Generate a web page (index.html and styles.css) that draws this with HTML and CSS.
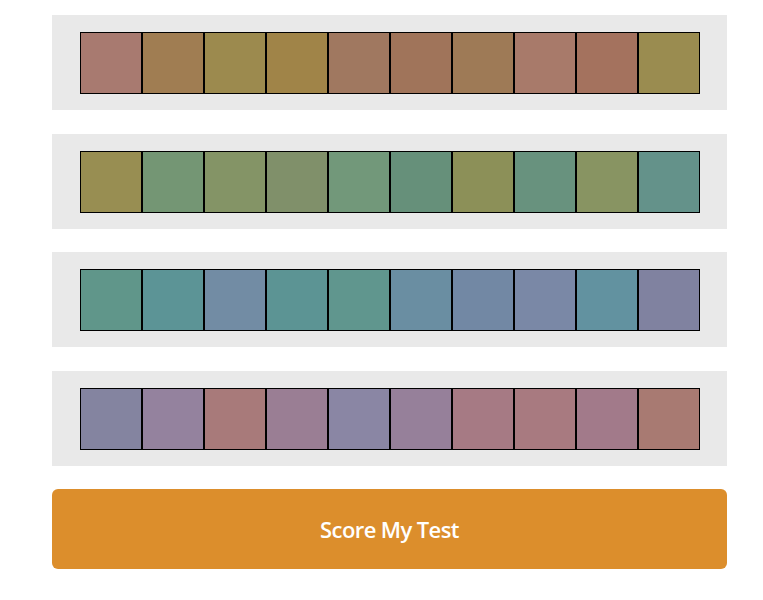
FILE: index.html
```html
<html>
<head>
  <title>Hue Test</title>
  <link rel="stylesheet" href="styles.css">
</head>
<body>
  <!-- Rows of colour caps, one panel per row -->
  <div class="test">
    <div class="row">
      <div class="cap" style="background-color: #a87a70;"></div>
      <div class="cap" style="background-color: #a07d52;"></div>
      <div class="cap" style="background-color: #9c8a4e;"></div>
      <div class="cap" style="background-color: #a08448;"></div>
      <div class="cap" style="background-color: #a07860;"></div>
      <div class="cap" style="background-color: #a0745a;"></div>
      <div class="cap" style="background-color: #9e7a56;"></div>
      <div class="cap" style="background-color: #a87a6a;"></div>
      <div class="cap" style="background-color: #a4725e;"></div>
      <div class="cap" style="background-color: #9a8c50;"></div>
    </div>
    <div class="row">
      <div class="cap" style="background-color: #988e52;"></div>
      <div class="cap" style="background-color: #749674;"></div>
      <div class="cap" style="background-color: #849466;"></div>
      <div class="cap" style="background-color: #80906a;"></div>
      <div class="cap" style="background-color: #72987a;"></div>
      <div class="cap" style="background-color: #66907a;"></div>
      <div class="cap" style="background-color: #8c9058;"></div>
      <div class="cap" style="background-color: #68927e;"></div>
      <div class="cap" style="background-color: #889462;"></div>
      <div class="cap" style="background-color: #64928a;"></div>
    </div>
    <div class="row">
      <div class="cap" style="background-color: #60968a;"></div>
      <div class="cap" style="background-color: #5c9496;"></div>
      <div class="cap" style="background-color: #728ca4;"></div>
      <div class="cap" style="background-color: #5c9494;"></div>
      <div class="cap" style="background-color: #60968e;"></div>
      <div class="cap" style="background-color: #6a8ea2;"></div>
      <div class="cap" style="background-color: #7288a4;"></div>
      <div class="cap" style="background-color: #7a88a6;"></div>
      <div class="cap" style="background-color: #6292a0;"></div>
      <div class="cap" style="background-color: #8082a0;"></div>
    </div>
    <div class="row">
      <div class="cap" style="background-color: #8484a0;"></div>
      <div class="cap" style="background-color: #94829e;"></div>
      <div class="cap" style="background-color: #a87a7a;"></div>
      <div class="cap" style="background-color: #9a7e94;"></div>
      <div class="cap" style="background-color: #8a86a4;"></div>
      <div class="cap" style="background-color: #96809a;"></div>
      <div class="cap" style="background-color: #a67a84;"></div>
      <div class="cap" style="background-color: #a87a80;"></div>
      <div class="cap" style="background-color: #a27a8a;"></div>
      <div class="cap" style="background-color: #a87a72;"></div>
    </div>
    <button class="score">Score My Test</button>
  </div>
</body>
</html>
```

FILE: styles.css
```css
/* Layout for the hue test rows and the score button */
body {
  margin: 0;
  padding: 15px 0 0 52px;
  background-color: white;
  font-family: "Open Sans", "Liberation Sans", sans-serif;
}
.test {
  width: 675px;
  display: flex;
  flex-direction: column;
  gap: 23.5px;
}
.row {
  display: flex;
  justify-content: center;
  padding: 17px 0 16px;
  background-color: #e9e9e9;
}
.cap {
  width: 60px;
  height: 60px;
  border: 1px solid black;
}
.score {
  height: 80px;
  border: none;
  border-radius: 6px;
  background-color: #dc8e2c;
  color: white;
  font-family: "Open Sans", "Liberation Sans", sans-serif;
  font-size: 22px;
  font-weight: 600;
  letter-spacing: -0.6px;
  cursor: pointer;
}
```
